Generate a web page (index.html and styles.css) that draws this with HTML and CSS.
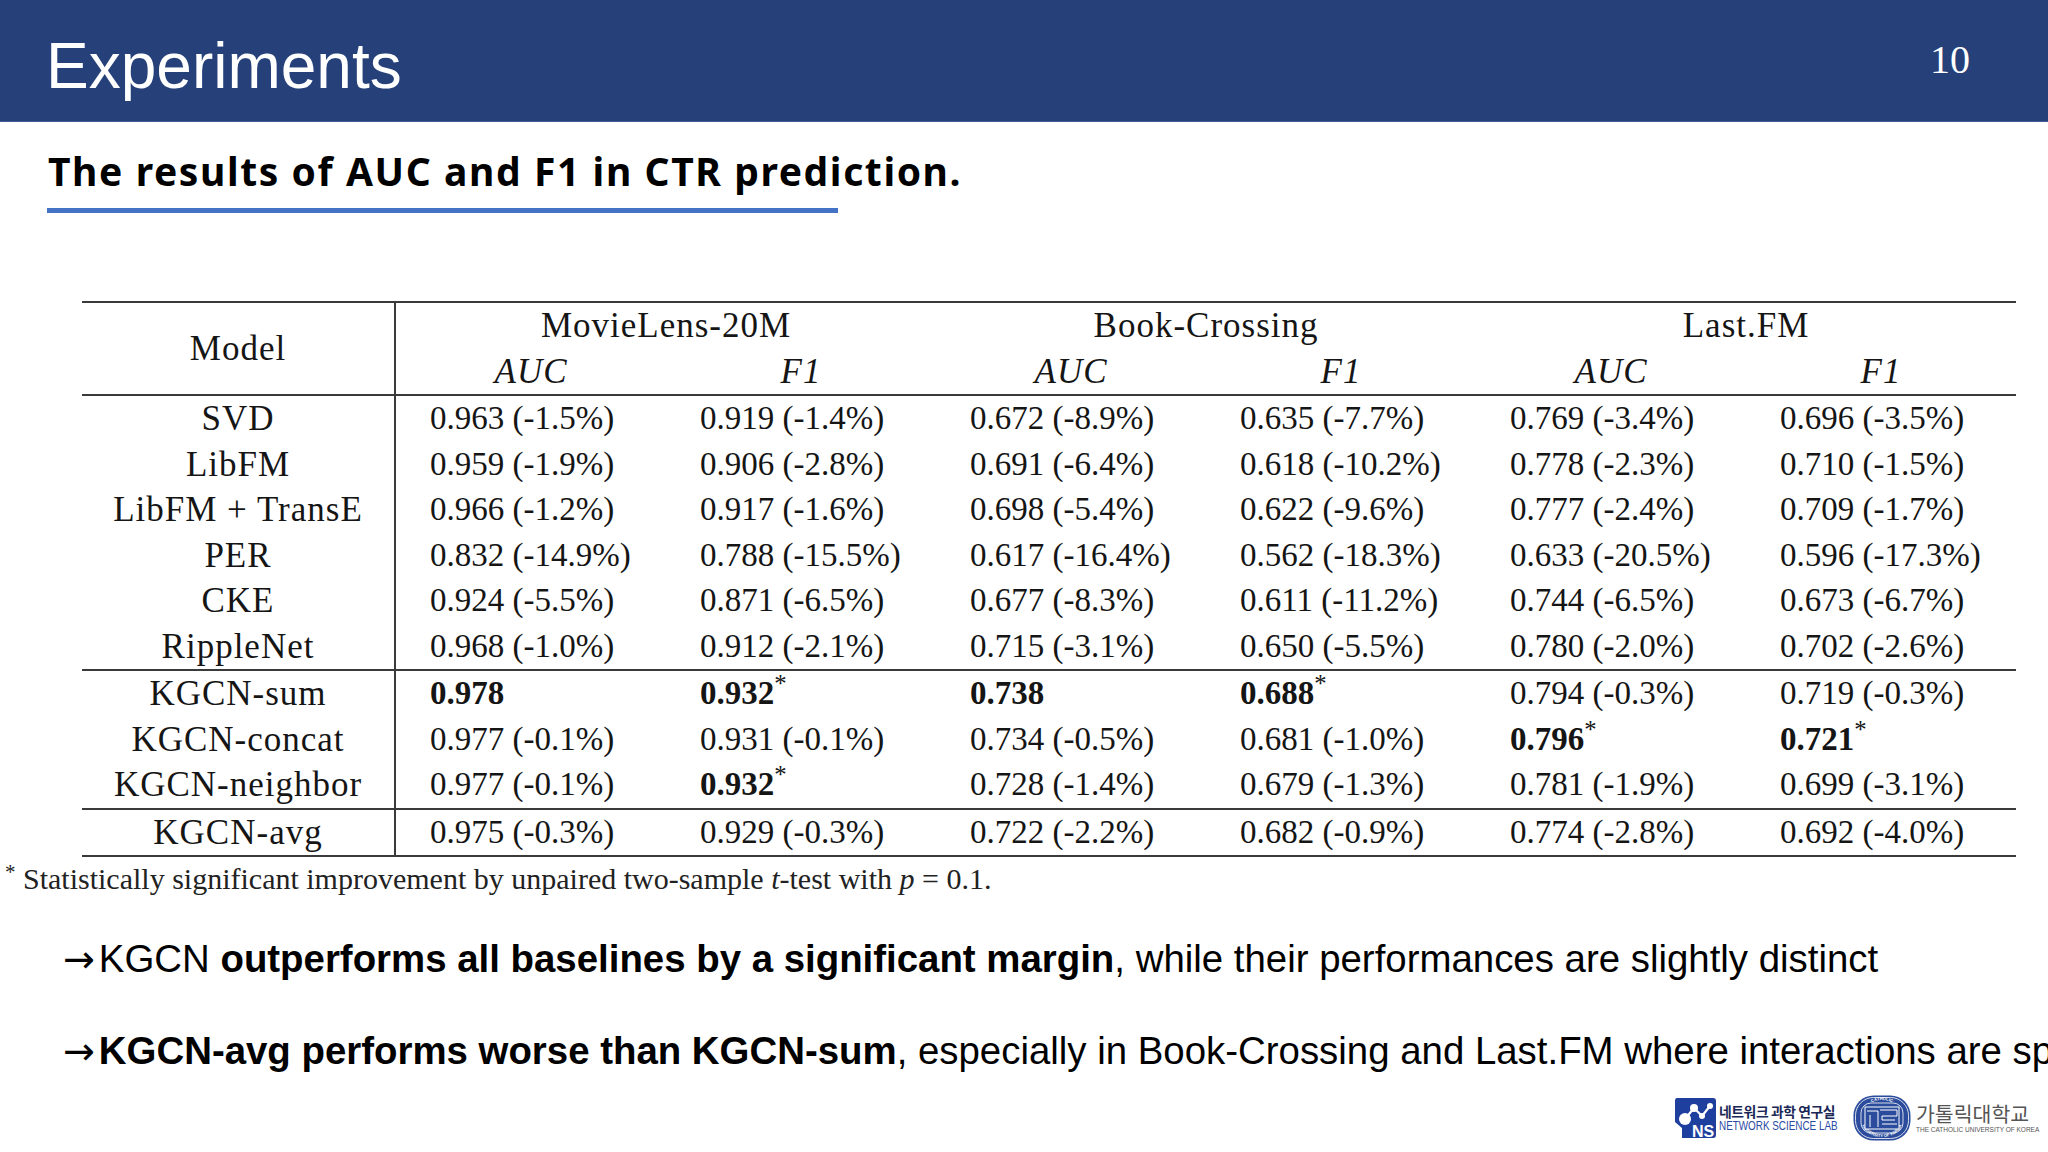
FILE: index.html
```html
<!DOCTYPE html>
<html lang="en">
<head>
<meta charset="utf-8">
<title>Experiments</title>
<link rel="stylesheet" href="styles.css">
</head>
<body>
<div class="slide">
  <header class="topbar">
    <h1 class="title">Experiments</h1>
    <span class="page-no">10</span>
  </header>

  <section class="heading">
    <h2 class="subtitle">The results of AUC and F1 in CTR prediction.</h2>
    <div class="subtitle-rule"></div>
  </section>

  <section class="results">
    <table class="res-table">
      <colgroup>
        <col class="c-model">
        <col class="c-val"><col class="c-val"><col class="c-val">
        <col class="c-val"><col class="c-val"><col class="c-val">
      </colgroup>
      <thead>
        <tr class="h1">
          <th rowspan="2" class="hd-model">Model</th>
          <th colspan="2">MovieLens-20M</th>
          <th colspan="2">Book-Crossing</th>
          <th colspan="2">Last.FM</th>
        </tr>
        <tr class="h2">
          <th>AUC</th><th>F1</th><th>AUC</th><th>F1</th><th>AUC</th><th>F1</th>
        </tr>
      </thead>
      <tbody class="grp">
        <tr><td class="model">SVD</td><td>0.963 (-1.5%)</td><td>0.919 (-1.4%)</td><td>0.672 (-8.9%)</td><td>0.635 (-7.7%)</td><td>0.769 (-3.4%)</td><td>0.696 (-3.5%)</td></tr>
        <tr><td class="model">LibFM</td><td>0.959 (-1.9%)</td><td>0.906 (-2.8%)</td><td>0.691 (-6.4%)</td><td>0.618 (-10.2%)</td><td>0.778 (-2.3%)</td><td>0.710 (-1.5%)</td></tr>
        <tr><td class="model">LibFM + TransE</td><td>0.966 (-1.2%)</td><td>0.917 (-1.6%)</td><td>0.698 (-5.4%)</td><td>0.622 (-9.6%)</td><td>0.777 (-2.4%)</td><td>0.709 (-1.7%)</td></tr>
        <tr><td class="model">PER</td><td>0.832 (-14.9%)</td><td>0.788 (-15.5%)</td><td>0.617 (-16.4%)</td><td>0.562 (-18.3%)</td><td>0.633 (-20.5%)</td><td>0.596 (-17.3%)</td></tr>
        <tr><td class="model">CKE</td><td>0.924 (-5.5%)</td><td>0.871 (-6.5%)</td><td>0.677 (-8.3%)</td><td>0.611 (-11.2%)</td><td>0.744 (-6.5%)</td><td>0.673 (-6.7%)</td></tr>
        <tr><td class="model">RippleNet</td><td>0.968 (-1.0%)</td><td>0.912 (-2.1%)</td><td>0.715 (-3.1%)</td><td>0.650 (-5.5%)</td><td>0.780 (-2.0%)</td><td>0.702 (-2.6%)</td></tr>
      </tbody>
      <tbody class="grp">
        <tr><td class="model">KGCN-sum</td><td><b>0.978</b></td><td><b>0.932</b><sup>*</sup></td><td><b>0.738</b></td><td><b>0.688</b><sup>*</sup></td><td>0.794 (-0.3%)</td><td>0.719 (-0.3%)</td></tr>
        <tr><td class="model">KGCN-concat</td><td>0.977 (-0.1%)</td><td>0.931 (-0.1%)</td><td>0.734 (-0.5%)</td><td>0.681 (-1.0%)</td><td><b>0.796</b><sup>*</sup></td><td><b>0.721</b><sup>*</sup></td></tr>
        <tr><td class="model">KGCN-neighbor</td><td>0.977 (-0.1%)</td><td><b>0.932</b><sup>*</sup></td><td>0.728 (-1.4%)</td><td>0.679 (-1.3%)</td><td>0.781 (-1.9%)</td><td>0.699 (-3.1%)</td></tr>
      </tbody>
      <tbody>
        <tr><td class="model">KGCN-avg</td><td>0.975 (-0.3%)</td><td>0.929 (-0.3%)</td><td>0.722 (-2.2%)</td><td>0.682 (-0.9%)</td><td>0.774 (-2.8%)</td><td>0.692 (-4.0%)</td></tr>
      </tbody>
    </table>
    <p class="footnote"><sup>*</sup> Statistically significant improvement by unpaired two-sample <i>t</i>-test with <i>p</i> = 0.1.</p>
  </section>

  <ul class="points">
    <li><span class="arrow">→</span>KGCN <b>outperforms all baselines by a significant margin</b>, while their performances are slightly distinct</li>
    <li><span class="arrow">→</span><b>KGCN-avg performs worse than KGCN-sum</b>, especially in Book-Crossing and Last.FM where interactions are sparse</li>
  </ul>

  <footer class="logos">
    <div class="lab">
      <svg class="ns-mark" viewBox="0 0 42 40" width="42" height="40" aria-hidden="true">
        <path d="M3 0 H39 Q42 0 42 3 V37 Q42 40 39 40 H8 V30 L1 24 V3 Q1 0 3 0 Z" fill="#1f3f9f"/>
        <g stroke="#fff" stroke-width="2.2" fill="none">
          <line x1="11" y1="21" x2="20" y2="10"/>
          <line x1="20" y1="10" x2="28" y2="18"/>
          <line x1="28" y1="18" x2="36" y2="8"/>
        </g>
        <g fill="#fff">
          <circle cx="11" cy="21" r="6"/>
          <circle cx="20" cy="10" r="4"/>
          <circle cx="28" cy="18" r="3"/>
          <circle cx="36" cy="8" r="3"/>
        </g>
        <text x="18" y="38.5" class="ns-letters">NS</text>
      </svg>
      <div class="lab-text">
        <span class="lab-ko">네트워크 과학 연구실</span>
        <span class="lab-en">NETWORK SCIENCE LAB</span>
      </div>
    </div>
    <div class="univ">
      <svg class="emblem" viewBox="0 0 58 46" width="58" height="46" aria-hidden="true">
        <defs>
          <path id="arcTop" d="M9 22 A20 17 0 0 1 49 22"/>
          <path id="arcBot" d="M8 25 A21 17 0 0 0 50 25"/>
        </defs>
        <rect x="0.5" y="0.5" width="57" height="45" rx="20" ry="20" fill="#2b4c9c"/>
        <rect x="2.5" y="2.5" width="53" height="41" rx="18" ry="18" fill="none" stroke="#fff" stroke-width="0.8"/>
        <rect x="8" y="8" width="42" height="30" rx="10" ry="10" fill="none" stroke="#fff" stroke-width="0.8"/>
        <text class="ring-text"><textPath href="#arcTop" startOffset="50%" text-anchor="middle">CATHOLIC</textPath></text>
        <text class="ring-text"><textPath href="#arcBot" startOffset="50%" text-anchor="middle">UNIVERSITY OF KOREA</textPath></text>
        <rect x="12" y="12" width="34" height="22" fill="#2b4c9c" stroke="#fff" stroke-width="1"/>
        <g fill="none" stroke="#fff" stroke-width="1">
          <path d="M14 16 H25 V32"/>
          <path d="M27 15 H44 V21 H29 V25 H42"/>
          <path d="M17 20 V32"/>
          <path d="M29 29 H44"/>
        </g>
      </svg>
      <div class="univ-text">
        <span class="univ-ko">가톨릭대학교</span>
        <span class="univ-en">THE CATHOLIC UNIVERSITY OF KOREA</span>
      </div>
    </div>
  </footer>
</div>
</body>
</html>
```

FILE: styles.css
```css
* {
  box-sizing: border-box;
}

html,
body {
  margin: 0;
  padding: 0;
}

body {
  width: 2048px;
  height: 1152px;
  overflow: hidden;
  background: #ffffff;
}

.slide {
  width: 2048px;
  height: 1152px;
  display: flex;
  flex-direction: column;
  overflow: hidden;
  background: #ffffff;
}

/* ---------- title bar ---------- */
.topbar {
  flex-shrink: 0;
  height: 122px;
  background: #26417a;
  border-bottom: 1px solid #3f5c98;
  display: flex;
  justify-content: space-between;
  align-items: flex-start;
  padding: 0 78px 0 46px;
}

.title {
  margin: 34px 0 0;
  font-family: "Liberation Sans", Arial, sans-serif;
  font-weight: 400;
  font-size: 64px;
  line-height: 64px;
  color: #ffffff;
}

.page-no {
  margin-top: 40px;
  font-family: "Liberation Serif", "Times New Roman", serif;
  font-size: 40px;
  line-height: 40px;
  color: #ffffff;
}

/* ---------- subtitle ---------- */
.heading {
  flex-shrink: 0;
  padding-left: 48px;
}

.subtitle {
  margin: 30px 0 0;
  font-family: "Noto Sans", "Liberation Sans", sans-serif;
  font-weight: 700;
  font-size: 39px;
  line-height: 38px;
  letter-spacing: 1.6px;
  color: #000000;
  white-space: nowrap;
}

.subtitle-rule {
  width: 791px;
  height: 5px;
  margin: 18px 0 0 -1px;
  background: #4472c4;
}

/* ---------- results table ---------- */
.results {
  flex-shrink: 0;
  margin-top: 88px;
}

.res-table {
  margin-left: 82px;
  width: 1934px;
  table-layout: fixed;
  border-collapse: separate;
  border-spacing: 0;
  border-top: 2px solid #3a3a3a;
  border-bottom: 2px solid #3a3a3a;
  font-family: "Liberation Serif", "Times New Roman", serif;
  font-size: 33px;
  color: #151515;
}

.c-model {
  width: 314px;
}

.c-val {
  width: 270px;
}

.res-table th {
  padding: 0;
  font-weight: 400;
  font-size: 35px;
  letter-spacing: 1px;
  text-align: center;
  white-space: nowrap;
}

.h1 th {
  line-height: 46px;
}

.h2 th {
  line-height: 45px;
  font-style: italic;
  border-bottom: 2px solid #3a3a3a;
}

.res-table .hd-model {
  vertical-align: middle;
  font-style: normal;
  border-right: 2px solid #3a3a3a;
  border-bottom: 2px solid #3a3a3a;
}

.res-table td {
  padding: 0 0 0 34px;
  line-height: 45.5px;
  text-align: left;
  white-space: nowrap;
}

.res-table td.model {
  padding: 0;
  font-size: 35px;
  letter-spacing: 1px;
  text-align: center;
  border-right: 2px solid #3a3a3a;
}

.grp tr:last-child td {
  border-bottom: 2px solid #3a3a3a;
}

.res-table b {
  font-weight: 700;
}

.res-table sup {
  font-size: 0.75em;
  line-height: 0;
  vertical-align: 0.5em;
}

.footnote {
  margin: 6px 0 0 5px;
  font-family: "Liberation Serif", "Times New Roman", serif;
  font-size: 30px;
  line-height: 32px;
  color: #222222;
  white-space: nowrap;
}

.footnote sup {
  font-size: 0.7em;
  line-height: 0;
  vertical-align: 0.5em;
}

/* ---------- bullet points ---------- */
.points {
  flex-shrink: 0;
  list-style: none;
  margin: 44px 0 0;
  padding: 0 0 0 63px;
  font-family: "Liberation Sans", Arial, sans-serif;
  font-size: 38.4px;
  line-height: 40px;
  color: #000000;
  white-space: nowrap;
}

.points li + li {
  margin-top: 52px;
}

.points b {
  font-weight: 700;
}

.arrow {
  font-family: "DejaVu Sans", sans-serif;
  font-weight: 400;
  font-size: 38px;
  margin-right: 4px;
}

/* ---------- logos ---------- */
.logos {
  flex-shrink: 0;
  align-self: flex-end;
  margin: 24px 16px 0 0;
  display: flex;
  align-items: center;
  gap: 14px;
}

.lab,
.univ {
  display: flex;
  align-items: center;
}

.lab {
  gap: 3px;
}

.univ {
  gap: 5px;
}

.ns-letters {
  font-family: "Liberation Sans", Arial, sans-serif;
  font-weight: 700;
  font-size: 16px;
  fill: #ffffff;
}

.lab-text {
  width: 120px;
  display: flex;
  flex-direction: column;
}

.lab-ko {
  font-family: "Noto Sans CJK KR", "Noto Sans", sans-serif;
  font-weight: 700;
  font-size: 13.8px;
  line-height: 16px;
  color: #1b2756;
  letter-spacing: -0.4px;
  white-space: nowrap;
}

.lab-en {
  display: inline-block;
  font-family: "Liberation Sans", Arial, sans-serif;
  font-size: 13px;
  line-height: 14px;
  color: #2a4ba3;
  white-space: nowrap;
  transform: scaleX(0.76);
  transform-origin: left center;
}

.ring-text {
  font-family: "Liberation Sans", Arial, sans-serif;
  font-size: 4.2px;
  font-weight: 700;
  fill: #ffffff;
}

.univ-text {
  display: flex;
  flex-direction: column;
  width: 116px;
}

.univ-ko {
  font-family: "Noto Sans CJK KR", "Noto Sans", sans-serif;
  font-size: 20.5px;
  line-height: 23px;
  color: #555555;
  white-space: nowrap;
}

.univ-en {
  font-family: "Liberation Sans", Arial, sans-serif;
  font-size: 6.5px;
  line-height: 10px;
  color: #555555;
  white-space: nowrap;
}
```
